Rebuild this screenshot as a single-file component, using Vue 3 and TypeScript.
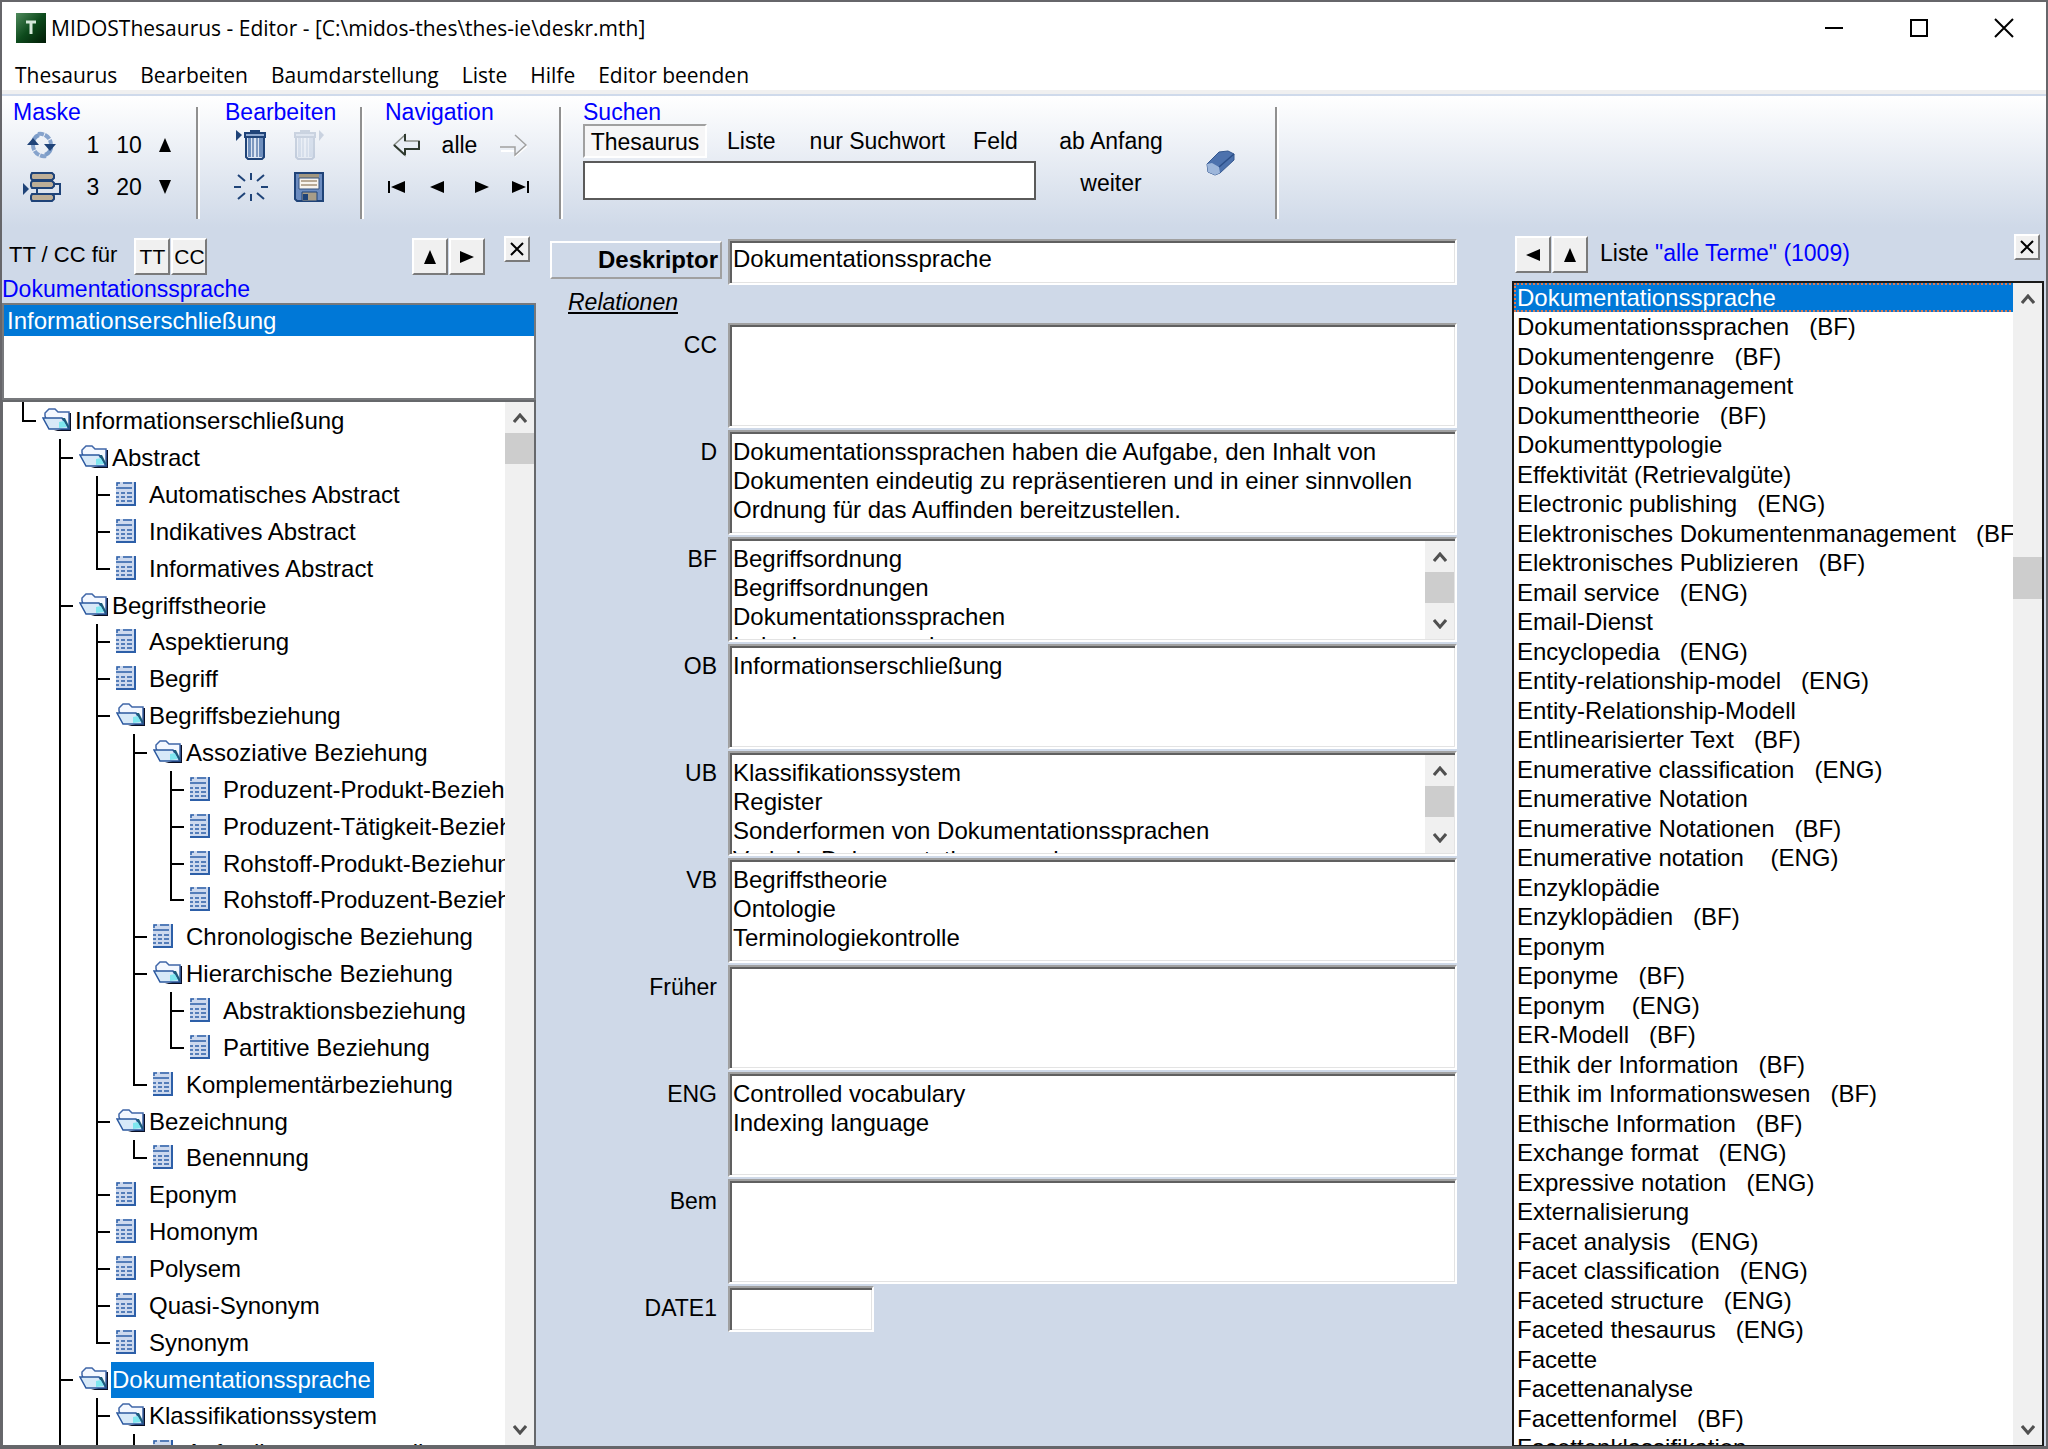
<script setup lang="ts">
import { ref } from 'vue'

interface TreeNode {
  level: number
  label: string
  folder?: boolean
}

interface Guide {
  vertical: 'none' | 'full' | 'half'
  tick: boolean
}

interface FieldDef {
  key: string
  text: string
  scroll?: boolean
}

const menu = ['Thesaurus', 'Bearbeiten', 'Baumdarstellung', 'Liste', 'Hilfe', 'Editor beenden']
const query = ref('')
const descriptor = ref('Dokumentationssprache')
const date1 = ref('')

const nodes: TreeNode[] = [
  { level: 0, label: 'Informationserschließung', folder: true },
  { level: 1, label: 'Abstract', folder: true },
  { level: 2, label: 'Automatisches Abstract' },
  { level: 2, label: 'Indikatives Abstract' },
  { level: 2, label: 'Informatives Abstract' },
  { level: 1, label: 'Begriffstheorie', folder: true },
  { level: 2, label: 'Aspektierung' },
  { level: 2, label: 'Begriff' },
  { level: 2, label: 'Begriffsbeziehung', folder: true },
  { level: 3, label: 'Assoziative Beziehung', folder: true },
  { level: 4, label: 'Produzent-Produkt-Beziehung' },
  { level: 4, label: 'Produzent-Tätigkeit-Beziehung' },
  { level: 4, label: 'Rohstoff-Produkt-Beziehung' },
  { level: 4, label: 'Rohstoff-Produzent-Beziehung' },
  { level: 3, label: 'Chronologische Beziehung' },
  { level: 3, label: 'Hierarchische Beziehung', folder: true },
  { level: 4, label: 'Abstraktionsbeziehung' },
  { level: 4, label: 'Partitive Beziehung' },
  { level: 3, label: 'Komplementärbeziehung' },
  { level: 2, label: 'Bezeichnung', folder: true },
  { level: 3, label: 'Benennung' },
  { level: 2, label: 'Eponym' },
  { level: 2, label: 'Homonym' },
  { level: 2, label: 'Polysem' },
  { level: 2, label: 'Quasi-Synonym' },
  { level: 2, label: 'Synonym' },
  { level: 1, label: 'Dokumentationssprache', folder: true },
  { level: 2, label: 'Klassifikationssystem', folder: true },
  { level: 3, label: 'Aufstellungssystematik' },
]

// Levels whose branches go on below the last loaded node.
const openLevels = [1, 2, 3]

function continues(index: number, level: number): boolean {
  for (let i = index + 1; i < nodes.length; i++) {
    if (nodes[i].level === level) return true
    if (nodes[i].level < level) return false
  }
  return openLevels.includes(level)
}

const rows = nodes.map((node, index) => {
  const guides: Guide[] = []
  for (let level = 0; level <= node.level; level++) {
    const more = continues(index, level)
    const own = level === node.level
    guides.push({ vertical: more ? 'full' : own ? 'half' : 'none', tick: own })
  }
  return { ...node, guides }
})

const fields = ref<FieldDef[]>([
  { key: 'CC', text: '' },
  {
    key: 'D',
    text: 'Dokumentationssprachen haben die Aufgabe, den Inhalt von\nDokumenten eindeutig zu repräsentieren und in einer sinnvollen\nOrdnung für das Auffinden bereitzustellen.',
  },
  { key: 'BF', text: 'Begriffsordnung\nBegriffsordnungen\nDokumentationssprachen\nIndexierungssprachen', scroll: true },
  { key: 'OB', text: 'Informationserschließung' },
  {
    key: 'UB',
    text: 'Klassifikationssystem\nRegister\nSonderformen von Dokumentationssprachen\nVerbale Dokumentationssprachen',
    scroll: true,
  },
  { key: 'VB', text: 'Begriffstheorie\nOntologie\nTerminologiekontrolle' },
  { key: 'Früher', text: '' },
  { key: 'ENG', text: 'Controlled vocabulary\nIndexing language' },
  { key: 'Bem', text: '' },
])

const terms: string[] = [
  'Dokumentationssprache',
  'Dokumentationssprachen   (BF)',
  'Dokumentengenre   (BF)',
  'Dokumentenmanagement',
  'Dokumenttheorie   (BF)',
  'Dokumenttypologie',
  'Effektivität (Retrievalgüte)',
  'Electronic publishing   (ENG)',
  'Elektronisches Dokumentenmanagement   (BF)',
  'Elektronisches Publizieren   (BF)',
  'Email service   (ENG)',
  'Email-Dienst',
  'Encyclopedia   (ENG)',
  'Entity-relationship-model   (ENG)',
  'Entity-Relationship-Modell',
  'Entlinearisierter Text   (BF)',
  'Enumerative classification   (ENG)',
  'Enumerative Notation',
  'Enumerative Notationen   (BF)',
  'Enumerative notation    (ENG)',
  'Enzyklopädie',
  'Enzyklopädien   (BF)',
  'Eponym',
  'Eponyme   (BF)',
  'Eponym    (ENG)',
  'ER-Modell   (BF)',
  'Ethik der Information   (BF)',
  'Ethik im Informationswesen   (BF)',
  'Ethische Information   (BF)',
  'Exchange format   (ENG)',
  'Expressive notation   (ENG)',
  'Externalisierung',
  'Facet analysis   (ENG)',
  'Facet classification   (ENG)',
  'Faceted structure   (ENG)',
  'Faceted thesaurus   (ENG)',
  'Facette',
  'Facettenanalyse',
  'Facettenformel   (BF)',
  'Facettenklassifikation',
]
</script>

<template>
  <svg class="defs" aria-hidden="true">
    <symbol id="g-folder" viewBox="0 0 30 26">
      <path d="M12 24H29V6h-2v14z" fill="#0a0f24" />
      <path d="M3 9V6l4-4h6l3 3h11v16H7z" fill="#f4f8ff" stroke="#3f66a8" stroke-width="1.5" />
      <path d="M1 11h19l7 11H7z" fill="#d7e9f8" stroke="#2b589f" stroke-width="1.5" />
      <path d="M17 15l5-1 3 6-8 1z" fill="#7fe6ee" />
      <path d="M20 11h3l4 8v3z" fill="#1c5c78" />
    </symbol>
    <symbol id="g-doc" viewBox="0 0 20 24">
      <path d="M0 0h20v24H0z" fill="#cdd9ee" />
      <path d="M19 0v23H0" fill="none" stroke="#2d5fa8" stroke-width="2" />
      <path d="M1 4V1h3M7 1h9M0 6h16" fill="none" stroke="#2d5fa8" stroke-width="1.5" />
      <path d="M0 11h3M5 11h4M11 11h5M0 15h3M5 15h4M11 15h5M0 19h3M5 19h4M11 19h5" stroke="#2d5fa8" stroke-width="1.5" />
    </symbol>
    <symbol id="g-up" viewBox="0 0 14 14"><path d="M7 0l6 14H1z" /></symbol>
    <symbol id="g-down" viewBox="0 0 14 14"><path d="M7 14L1 0h12z" /></symbol>
    <symbol id="g-left" viewBox="0 0 14 14"><path d="M0 7L14 1v12z" /></symbol>
    <symbol id="g-right" viewBox="0 0 14 14"><path d="M14 7L0 1v12z" /></symbol>
    <symbol id="g-x" viewBox="0 0 14 14"><path d="M1 1l12 12M13 1L1 13" fill="none" stroke="#000" stroke-width="2" /></symbol>
    <symbol id="g-chev-up" viewBox="0 0 14 10"><path d="M1 9l6-7 6 7" fill="none" stroke="#505050" stroke-width="3" /></symbol>
    <symbol id="g-chev-down" viewBox="0 0 14 10"><path d="M1 1l6 7 6-7" fill="none" stroke="#505050" stroke-width="3" /></symbol>
    <symbol id="g-trash" viewBox="0 0 22 30">
      <path d="M2 6v21l2 2h14l2-2V6z" fill="#dce5f3" stroke="#1f4378" stroke-width="2" />
      <path d="M4 8h3v19H4zM15 8h4v19h-4z" fill="#6f8fbd" />
      <path d="M9 8v19M13 8v19" stroke="#5f7fae" stroke-width="1.5" />
      <path d="M1 3h20v4H1z" fill="#8fa9cf" stroke="#1f4378" stroke-width="2" />
      <path d="M6 1h10" stroke="#1f4378" stroke-width="2" />
    </symbol>
  </svg>

  <div class="window">
    <header class="titlebar">
      <svg class="logo" viewBox="0 0 30 30" aria-hidden="true">
        <defs>
          <linearGradient id="logo-fill" x1="0" y1="0" x2="1" y2="1">
            <stop offset="0" stop-color="#4f8a5c" />
            <stop offset="0.5" stop-color="#0d4a1c" />
            <stop offset="1" stop-color="#011a05" />
          </linearGradient>
        </defs>
        <rect width="30" height="30" fill="url(#logo-fill)" />
        <path d="M10 9h10M15 9v12" fill="none" stroke="#d5e8da" stroke-width="3" />
      </svg>
      <h1>MIDOSThesaurus - Editor - [C:\midos-thes\thes-ie\deskr.mth]</h1>
      <button type="button" class="winctl" aria-label="Minimieren">
        <svg width="20" height="20"><path d="M1 10h18" stroke="#000" stroke-width="2" /></svg>
      </button>
      <button type="button" class="winctl" aria-label="Maximieren">
        <svg width="20" height="20"><path d="M2 2h16v16H2z" fill="none" stroke="#000" stroke-width="2" /></svg>
      </button>
      <button type="button" class="winctl" aria-label="Schließen">
        <svg width="20" height="20"><path d="M1 1l18 18M19 1L1 19" stroke="#000" stroke-width="2" /></svg>
      </button>
    </header>

    <nav class="menubar">
      <button v-for="item in menu" :key="item" type="button">{{ item }}</button>
    </nav>

    <section class="toolbar">
      <div class="group maske">
        <h2>Maske</h2>
        <div class="cells">
          <button type="button" aria-label="Aktualisieren">
            <svg width="30" height="28" viewBox="0 0 30 28">
              <path d="M6 14A9 9 0 0 1 12 4M24 14a9 9 0 0 1-6 10" fill="none" stroke="#7c9cc8" stroke-width="4" />
              <path d="M11 3a11 11 0 0 1 13 10M19 25A11 11 0 0 1 6 14" fill="none" stroke="#86a3cc" stroke-width="4" stroke-dasharray="6 1" />
              <path d="M17 13h12l-6 7zM0 14h12l-6-7z" fill="#1f4378" />
            </svg>
          </button>
          <button type="button">1</button>
          <button type="button">10</button>
          <button type="button" aria-label="Hoch"><svg width="14" height="14"><use href="#g-up" /></svg></button>
          <button type="button" aria-label="Maskenfelder">
            <svg width="38" height="30" viewBox="0 0 38 30">
              <path d="M0 11l6 6-6 6z" fill="#1f4378" />
              <path d="M30 12h7v10H14v-5" fill="none" stroke="#1f4378" stroke-width="2" />
              <path d="M9 1h20l2 2v3l-2 2H9L8 6V3zM9 9h20l2 2v3l-2 2H9l-1-2v-3zM9 22h20l2 2v3l-2 2H9l-1-2v-3z" fill="#bdae97" stroke="#1f4378" stroke-width="2" />
            </svg>
          </button>
          <button type="button">3</button>
          <button type="button">20</button>
          <button type="button" aria-label="Runter"><svg width="14" height="14"><use href="#g-down" /></svg></button>
        </div>
      </div>
      <div class="sep"></div>

      <div class="group bearbeiten">
        <h2>Bearbeiten</h2>
        <div class="cells">
          <button type="button" aria-label="Löschen">
            <svg width="30" height="30"><path d="M0 0l6 5-6 6z" fill="#1f4378" /><use href="#g-trash" x="8" width="22" height="30" /></svg>
          </button>
          <button type="button" aria-label="Wiederherstellen" disabled>
            <svg class="dim" width="30" height="30"><use href="#g-trash" x="0" width="22" height="30" /><path d="M25 0l5 5-5 6z" fill="#1f4378" /></svg>
          </button>
          <button type="button" aria-label="Neu">
            <svg width="34" height="28" viewBox="0 0 34 28">
              <path d="M17 0v7M17 21v7M0 14h7M27 14h7M4 2l7 6M30 2l-7 6M4 26l7-6M30 26l-7-6" stroke="#1f4378" stroke-width="2" />
            </svg>
          </button>
          <button type="button" aria-label="Speichern">
            <svg width="30" height="30" viewBox="0 0 30 30">
              <path d="M1 1h28v28H3l-2-2z" fill="#6c8cc0" stroke="#1f4378" stroke-width="2" />
              <path d="M5 2h20v4H5z" fill="#a2977f" />
              <path d="M5 6h20v11H5z" fill="#f8f4ee" stroke="#35527f" />
              <path d="M7 9h16M7 13h16" stroke="#b9aa96" stroke-width="2" />
              <path d="M8 20h15v9H8z" fill="#a89d88" stroke="#1f4378" />
              <path d="M9 22h5v6H9z" fill="#1f4378" />
            </svg>
          </button>
        </div>
      </div>
      <div class="sep"></div>

      <div class="group navigation">
        <h2>Navigation</h2>
        <div class="history">
          <button type="button" aria-label="Zurück">
            <svg width="28" height="24" viewBox="0 0 28 24">
              <path d="M1 12L12 2v6h14v8H12v6z" fill="#e9eef5" stroke="#8a8f88" stroke-width="1.5" />
              <path d="M12 1v7M12 22v-6h14V8M1 12l11 10" fill="none" stroke="#2f3a2f" stroke-width="2" />
            </svg>
          </button>
          <button type="button">alle</button>
          <button type="button" aria-label="Vor" disabled>
            <svg width="28" height="24" viewBox="0 0 28 24">
              <path d="M2 18h14v5L28 13" fill="none" stroke="#fff" stroke-width="2" />
              <path d="M1 14h15v8L27 12 16 2" fill="none" stroke="#a0a0a0" stroke-width="1.5" />
            </svg>
          </button>
        </div>
        <div class="steps">
          <button type="button" aria-label="Erster">
            <svg width="20" height="14"><path d="M1 1h2v12H1zM4 7l14-6v12z" /></svg>
          </button>
          <button type="button" aria-label="Voriger"><svg width="14" height="14"><use href="#g-left" /></svg></button>
          <button type="button" aria-label="Nächster"><svg width="14" height="14"><use href="#g-right" /></svg></button>
          <button type="button" aria-label="Letzter">
            <svg width="20" height="14"><path d="M17 1h2v12h-2zM16 7L2 1v12z" /></svg>
          </button>
        </div>
      </div>
      <div class="sep"></div>

      <div class="group suchen">
        <h2><label for="query">Suchen</label></h2>
        <div class="search">
          <div class="search-main">
            <div class="modes">
              <button type="button" class="pressed" aria-pressed="true">Thesaurus</button>
              <button type="button" class="wide">Liste</button>
              <button type="button">nur Suchwort</button>
              <button type="button">Feld</button>
            </div>
            <input id="query" v-model="query" type="text" />
          </div>
          <div class="search-actions">
            <button type="button">ab Anfang</button>
            <button type="button">weiter</button>
          </div>
          <button type="button" class="erase" aria-label="Suche leeren">
            <svg width="30" height="26" viewBox="0 0 30 26">
              <path d="M1 14L13 2l9-1 6 3v6L14 23l-5 2-7-3z" fill="#4d72ad" stroke="#35588f" />
              <path d="M1 14l5-1 7 4 1 6-5 2-7-3z" fill="#9db6da" />
              <path d="M13 17L28 4" stroke="#2c4f88" stroke-width="1.5" />
            </svg>
          </button>
        </div>
      </div>
      <div class="sep"></div>
    </section>

    <main class="panes">
      <section class="pane left">
        <div class="pane-head">
          <span class="caption">TT / CC für</span>
          <button type="button" class="bevel">TT</button>
          <button type="button" class="bevel">CC</button>
          <span class="fill"></span>
          <button type="button" class="bevel" aria-label="Nach oben"><svg width="14" height="14"><use href="#g-up" /></svg></button>
          <button type="button" class="bevel" aria-label="Nach rechts"><svg width="14" height="14"><use href="#g-right" /></svg></button>
          <button type="button" class="bevel small" aria-label="Bereich schließen"><svg width="14" height="14"><use href="#g-x" /></svg></button>
        </div>
        <p class="current">Dokumentationssprache</p>
        <ul class="tops" role="listbox" aria-label="TT / CC">
          <li role="option" aria-selected="true">Informationserschließung</li>
        </ul>
        <div class="tree">
          <ul role="tree">
            <li v-for="(row, i) in rows" :key="i" role="treeitem" :aria-level="row.level + 1">
              <span v-for="(g, k) in row.guides" :key="k" class="guide">
                <i :class="['line', g.vertical]"></i><i v-if="g.tick" class="tick"></i>
              </span>
              <svg v-if="row.folder" class="folder" width="30" height="26"><use href="#g-folder" /></svg>
              <svg v-else class="doc" width="20" height="24"><use href="#g-doc" /></svg>
              <span :class="['name', { chosen: row.label === descriptor }]">{{ row.label }}</span>
            </li>
          </ul>
          <div class="scroll" aria-hidden="true">
            <span class="arrow"><svg width="14" height="10"><use href="#g-chev-up" /></svg></span>
            <span class="thumb"></span>
            <span class="fill"></span>
            <span class="arrow"><svg width="14" height="10"><use href="#g-chev-down" /></svg></span>
          </div>
        </div>
      </section>

      <form class="pane form" @submit.prevent>
        <div class="row">
          <button type="button" class="deskriptor">Deskriptor</button>
          <input v-model="descriptor" class="sunken line-input" type="text" aria-label="Deskriptor" />
        </div>
        <p class="relations"><a href="#">Relationen</a></p>
        <div v-for="field in fields" :key="field.key" class="row">
          <label :for="'f-' + field.key">{{ field.key }}</label>
          <div class="sunken memo">
            <textarea :id="'f-' + field.key" v-model="field.text" spellcheck="false"></textarea>
            <div v-if="field.scroll" class="scroll" aria-hidden="true">
              <span class="arrow"><svg width="14" height="10"><use href="#g-chev-up" /></svg></span>
              <span class="thumb"></span>
              <span class="fill"></span>
              <span class="arrow"><svg width="14" height="10"><use href="#g-chev-down" /></svg></span>
            </div>
          </div>
        </div>
        <div class="row">
          <label for="f-date">DATE1</label>
          <input id="f-date" v-model="date1" class="sunken line-input date" type="text" />
        </div>
      </form>

      <section class="pane right">
        <div class="pane-head">
          <button type="button" class="bevel" aria-label="Nach links"><svg width="14" height="14"><use href="#g-left" /></svg></button>
          <button type="button" class="bevel" aria-label="Nach oben"><svg width="14" height="14"><use href="#g-up" /></svg></button>
          <span class="caption">Liste <span class="blue">"alle Terme" (1009)</span></span>
          <span class="fill"></span>
          <button type="button" class="bevel small" aria-label="Liste schließen"><svg width="14" height="14"><use href="#g-x" /></svg></button>
        </div>
        <div class="terms">
          <ul role="listbox" aria-label="alle Terme">
            <li v-for="(term, i) in terms" :key="term" role="option" :class="{ chosen: i === 0 }" :aria-selected="i === 0">{{ term }}</li>
          </ul>
          <div class="scroll" aria-hidden="true">
            <span class="arrow"><svg width="14" height="10"><use href="#g-chev-up" /></svg></span>
            <span class="before"></span>
            <span class="thumb"></span>
            <span class="after"></span>
            <span class="arrow"><svg width="14" height="10"><use href="#g-chev-down" /></svg></span>
          </div>
        </div>
      </section>
    </main>
  </div>
</template>

<style>
body {
  margin: 0;
  background: #cfd9e8;
}
</style>

<style scoped>
* {
  box-sizing: border-box;
}
.defs {
  position: absolute;
  width: 0;
  height: 0;
}
.window {
  display: flex;
  flex-direction: column;
  height: 100vh;
  border: 2px solid #66666a;
  border-bottom-width: 3px;
  background: #cfd9e8;
  color: #000;
  font-family: 'Liberation Sans', Arial, sans-serif;
  font-size: 24px;
}
h1,
h2,
p,
ul {
  margin: 0;
  padding: 0;
  list-style: none;
  font-weight: normal;
}
button {
  display: flex;
  align-items: center;
  justify-content: center;
  margin: 0;
  padding: 0;
  border: 0;
  background: none;
  color: inherit;
  font: inherit;
  white-space: nowrap;
}
input,
textarea {
  margin: 0;
  color: inherit;
  font: inherit;
  outline: 0;
}

.titlebar {
  display: flex;
  flex: none;
  align-items: center;
  height: 52px;
  padding-left: 14px;
  background: #fff;
}
.logo {
  width: 30px;
  height: 30px;
}
h1 {
  flex: 1;
  padding-left: 5px;
  font: 21px/30px 'Open Sans', 'Segoe UI', sans-serif;
  white-space: nowrap;
}
.winctl {
  width: 85px;
  height: 52px;
}
.menubar {
  display: flex;
  flex: none;
  gap: 23px;
  height: 40px;
  padding: 5px 13px 0;
  border-bottom: 4px solid #f0f0f0;
  background: #fff;
  font: 21px/30px 'Open Sans', 'Segoe UI', sans-serif;
}

.toolbar {
  display: flex;
  flex: none;
  height: 133px;
  padding-top: 4px;
  border-top: 2px solid #cfdaeb;
  background: linear-gradient(#fff, #cfd9e8);
  font-size: 23px;
}
.toolbar h2 {
  color: #00f;
  font-size: 23px;
  line-height: 24px;
}
.sep {
  width: 4px;
  height: 112px;
  margin-top: 7px;
  border-right: 2px solid #fff;
  border-left: 2px solid #909090;
}
.cells {
  display: grid;
  grid-auto-rows: 42px;
}
.maske {
  width: 194px;
  padding-left: 11px;
}
.maske .cells {
  grid-template-columns: 58px 44px 28px 44px;
}
.bearbeiten {
  width: 160px;
  padding-left: 22px;
}
.bearbeiten h2 {
  padding-left: 3px;
}
.bearbeiten .cells {
  grid-template-columns: 58px 58px;
}
.dim {
  opacity: 0.18;
}
.navigation {
  width: 195px;
  padding-left: 16px;
}
.navigation h2 {
  padding-left: 5px;
}
.history,
.steps {
  display: grid;
  grid-template-columns: 53px 53px 53px;
  height: 42px;
}
.steps {
  grid-template-columns: 34px 46px 44px 32px;
}
.suchen {
  width: 712px;
  padding-left: 20px;
}
.search {
  display: flex;
}
.search-main {
  width: 453px;
}
.modes {
  display: flex;
  height: 34px;
  margin-bottom: 3px;
}
.modes button {
  padding: 0 14px;
}
.modes .wide {
  padding: 0 20px;
}
.modes .pressed {
  width: 124px;
  padding: 2px 0 0;
  border: 2px solid #fff;
  border-top-color: #a0a0a0;
  border-left-color: #a0a0a0;
  background: #f6f6f7;
}
.search-main input {
  display: block;
  width: 100%;
  height: 39px;
  padding: 0 4px;
  border: 2px solid #5a5a5a;
  background: #fff;
}
.search-actions {
  display: grid;
  grid-auto-rows: 34px;
  row-gap: 8px;
  width: 150px;
}
.erase {
  width: 70px;
  height: 78px;
}

.panes {
  display: grid;
  flex: 1;
  grid-template-columns: 534px 1fr 534px;
  min-height: 0;
}
.pane {
  min-width: 0;
  min-height: 0;
}
.left,
.right {
  display: flex;
  flex-direction: column;
}
.pane-head {
  display: flex;
  flex: none;
  align-items: flex-start;
  gap: 1px;
  height: 49px;
  padding: 11px 6px 0 7px;
}
.caption {
  margin-right: 16px;
  font-size: 23px;
  line-height: 34px;
  white-space: nowrap;
}
.left .caption {
  font-size: 22px;
}
.blue,
.current {
  color: #00f;
}
.fill {
  flex: 1;
}
.bevel {
  width: 36px;
  height: 37px;
  border: 2px solid #fff;
  border-right-color: #7a7a7a;
  border-bottom-color: #7a7a7a;
  background: #f0f0f0;
  font-size: 21px;
}
.small {
  width: 26px;
  height: 26px;
  margin: -2px 0 0 18px;
}
.current {
  flex: none;
  font-size: 23px;
  line-height: 27px;
}
.tops {
  flex: none;
  height: 97px;
  border: 2px solid #77797c;
  background: #fff;
}
.tops li {
  height: 31px;
  padding-left: 3px;
  background: #0078d7;
  color: #fff;
  line-height: 32px;
}
.tree {
  display: flex;
  flex: 1;
  min-height: 0;
  border: 2px solid #66686b;
  border-left-width: 1px;
  border-bottom-width: 1px;
  background: #fff;
}
.tree ul {
  display: grid;
  flex: 1;
  grid-auto-rows: 37px 37px 37px 37px 37px 37px 36px;
  min-width: 0;
  padding-left: 19px;
  overflow: hidden;
}
.tree li {
  display: flex;
  align-items: center;
  overflow: hidden;
  white-space: nowrap;
}
.guide {
  position: relative;
  flex: none;
  width: 37px;
  height: 100%;
}
.line,
.tick {
  position: absolute;
  background: #000;
}
.line {
  top: 0;
  left: 0;
  width: 2px;
  height: 0;
}
.line.full {
  height: 100%;
}
.line.half {
  height: 50%;
}
.tick {
  top: 50%;
  left: 0;
  width: 14px;
  height: 2px;
  margin-top: -1px;
}
.folder,
.doc {
  flex: none;
  margin: 0 2px 2px -17px;
}
.doc {
  margin-right: 12px;
}
.name {
  padding: 0 3px 0 1px;
  line-height: 36px;
}
.name.chosen {
  background: #0078d7;
  color: #fff;
}
.scroll {
  display: flex;
  flex: none;
  flex-direction: column;
  width: 29px;
  background: #f0f0f0;
}
.arrow {
  display: flex;
  flex: none;
  align-items: center;
  justify-content: center;
  height: 31px;
}
.thumb {
  flex: none;
  height: 31px;
  background: #cdcdcd;
}

.form {
  padding: 12px 55px 0 14px;
}
.row {
  display: flex;
  align-items: flex-start;
  gap: 6px;
  margin-bottom: 2px;
}
.row label {
  width: 172px;
  padding: 7px 5px 0 0;
  font-size: 23px;
  line-height: 30px;
  text-align: right;
}
.deskriptor {
  justify-content: flex-end;
  width: 172px;
  height: 38px;
  margin-top: 2px;
  padding-right: 2px;
  border: 2px solid #fff;
  border-right-color: #a0a0a0;
  border-bottom-color: #a0a0a0;
  font-weight: bold;
}
.sunken {
  flex: 1;
  min-width: 0;
  border: 2px solid #fff;
  border-top-color: #a0a0a0;
  border-left-color: #a0a0a0;
  box-shadow: inset 2px 2px #606060, inset -1px -1px #e3e3e3;
  background: #fff;
}
.line-input {
  height: 46px;
  padding: 0 3px 6px;
}
.date {
  flex: none;
  width: 146px;
}
.memo {
  display: flex;
  height: 105px;
  padding: 2px 1px 1px 3px;
}
.memo textarea {
  flex: 1;
  min-width: 0;
  padding: 3px 0 0;
  border: 0;
  background: none;
  line-height: 29px;
  overflow: hidden;
  resize: none;
  white-space: pre-wrap;
}
.relations {
  height: 36px;
  padding-left: 18px;
  font-size: 23px;
  font-style: italic;
  line-height: 30px;
}
.relations a {
  color: #000;
}

.terms {
  display: flex;
  flex: 1;
  min-height: 0;
  margin: 5px 2px 0 0;
  border: 2px solid #1a1a1a;
  border-bottom-width: 1px;
  background: #fff;
}
.right .caption {
  margin: 0 0 0 11px;
}
.terms ul {
  display: grid;
  flex: 1;
  grid-auto-rows: 29px 30px;
  min-width: 0;
  overflow: hidden;
}
.terms li {
  padding-left: 3px;
  line-height: 29px;
  white-space: pre;
}
.terms .chosen {
  outline: 2px dotted #e07a50;
  outline-offset: -2px;
  background: #0078d7;
  color: #fff;
}
.before {
  flex: 23;
}
.after {
  flex: 77;
}
.terms .thumb {
  height: 42px;
}
.right .pane-head {
  padding: 9px 6px 0 3px;
}
</style>
